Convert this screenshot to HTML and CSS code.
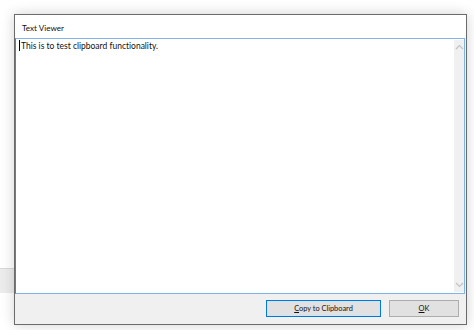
FILE: index.html
```html
<!DOCTYPE html>
<html>
<head>
<meta charset="utf-8">
<link rel="stylesheet" href="styles.css">
</head>
<body>
<div class="backdrop"></div>
<div class="window">
  <div class="titlebar">Text Viewer</div>
  <div class="textbox">
    <div class="content"><span class="caret"></span>This is to test clipboard functionality.</div>
    <div class="scrollbar">
      <svg class="arrow" width="9" height="6" viewBox="0 0 9 6"><path d="M1 5 L4.5 1.5 L8 5" fill="none" stroke="#c2c2c2" stroke-width="1.2"/></svg>
      <svg class="arrow" width="9" height="6" viewBox="0 0 9 6"><path d="M1 1 L4.5 4.5 L8 1" fill="none" stroke="#c2c2c2" stroke-width="1.2"/></svg>
    </div>
  </div>
  <div class="footer">
    <button class="btn default"><u>C</u>opy to Clipboard</button>
    <button class="btn ok"><u>O</u>K</button>
  </div>
</div>
</body>
</html>
```
FILE: styles.css
```css
html, body {
  margin: 0;
  padding: 0;
  background: #ffffff;
  width: 474px;
  height: 330px;
  overflow: hidden;
  font-family: Lato, "Open Sans", sans-serif;
  font-variant-ligatures: none;
}
body {
  position: relative;
  padding-top: 14px;
  padding-left: 14px;
  box-sizing: border-box;
}
.backdrop {
  position: absolute;
  left: 0;
  top: 268px;
  width: 16px;
  height: 24px;
  background: #ececec;
  border-top: 1px solid #d8d8d8;
}
.window {
  position: relative;
  width: 453px;
  height: 311px;
  border: 1px solid #6b6b6b;
  box-sizing: border-box;
  background: #f0f0f0;
  display: flex;
  flex-direction: column;
  box-shadow: 0 0 12px rgba(0,0,0,0.18);
}
.titlebar {
  height: 23px;
  background: #ffffff;
  font-size: 8.1px;
  color: #111;
  padding-left: 7px;
  line-height: 26px;
  box-sizing: border-box;
}
.textbox {
  height: 256px;
  margin-right: 1px;
  border: 1px solid #7eb4ea;
  border-left-color: #5a7fa8;
  background: #fff;
  display: flex;
  box-sizing: border-box;
}
.content {
  flex: 1;
  font-size: 8.5px;
  color: #111;
  padding: 1px 0 0 3px;
  line-height: 13px;
  position: relative;
}
.caret {
  display: inline-block;
  width: 1px;
  height: 11px;
  background: #000;
  vertical-align: -2px;
  margin-right: 1px;
}
.scrollbar {
  width: 10px;
  margin: 1px 0 1px 0;
  background: #f0f0f0;
  display: flex;
  flex-direction: column;
  justify-content: space-between;
  align-items: center;
  padding: 4px 0 4px;
}
.arrow { display: block; }
.footer {
  flex: 1;
  display: flex;
  justify-content: flex-end;
  align-items: flex-start;
  padding: 6px 7px 0 0;
  gap: 8px;
}
.btn {
  height: 17px;
  box-sizing: border-box;
  background: #e1e1e1;
  border: 1px solid #adadad;
  font-family: Lato, "Open Sans", sans-serif;
  font-variant-ligatures: none;
  font-size: 7.4px;
  color: #111;
  padding: 0;
  line-height: 14px;
}
.btn.default {
  width: 115px;
  border: 1px solid #0078d7;
  box-shadow: inset 0 0 0 1px #cce4f7;
}
.btn.ok {
  width: 70px;
}
```
